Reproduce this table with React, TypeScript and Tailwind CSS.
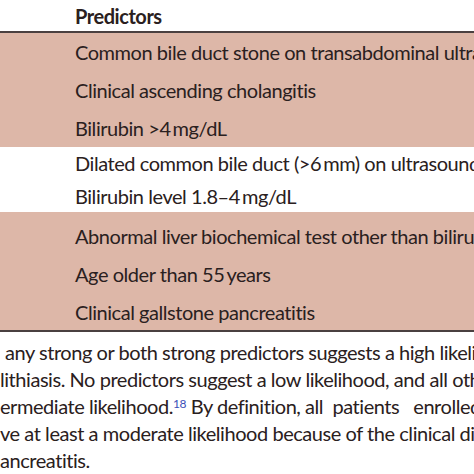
const strong = [
  'Common bile duct stone on transabdominal ultrasound',
  'Clinical ascending cholangitis',
  'Bilirubin >4\u2009mg/dL',
];

const moderate = [
  'Dilated common bile duct (>6\u2009mm) on ultrasound',
  'Bilirubin level 1.8\u20134\u2009mg/dL',
];

const weak = [
  'Abnormal liver biochemical test other than bilirubin',
  'Age older than 55\u2009years',
  'Clinical gallstone pancreatitis',
];

function Row({ text, h }: { text: string; h: string }) {
  return (
    <div className={`flex items-center ${h} pl-[75px] whitespace-nowrap`}>
      {text}
    </div>
  );
}

export default function App() {
  return (
    <div
      className="w-[474px] h-[474px] overflow-hidden bg-white text-[#2a2020] text-[20px] tracking-[-0.45px] leading-none [font-variant-ligatures:none]"
      style={{ fontFamily: 'Lato, "Open Sans", sans-serif' }}
    >
      {/* Header */}
      <div className="h-[31px] flex items-center pl-[75px] font-bold">Predictors</div>
      <div className="h-[2px] bg-[#4a4040]" />

      {/* Strong */}
      <div className="bg-[#ddb7a8] h-[114px] flex flex-col justify-center">
        {strong.map((t) => (
          <Row key={t} text={t} h="h-[38px]" />
        ))}
      </div>

      {/* Moderate */}
      <div className="bg-white h-[65px] flex flex-col justify-center">
        {moderate.map((t) => (
          <Row key={t} text={t} h="h-[33px]" />
        ))}
      </div>

      {/* Weak */}
      <div className="bg-[#ddb7a8] h-[118px] flex flex-col pt-[5px] overflow-hidden">
        {weak.map((t) => (
          <Row key={t} text={t} h="h-[38px] shrink-0" />
        ))}
      </div>
      <div className="h-[2px] bg-[#4a4040]" />

      {/* Footnote */}
      <div className="pt-[7px] leading-[27px] whitespace-nowrap">
        <div className="pl-[5px]">any strong or both strong predictors suggests a high likelihood</div>
        <div>lithiasis. No predictors suggest a low likelihood, and all others</div>
        <div>
          ermediate likelihood.<sup className="text-[#3b4fb8] text-[12px]">18</sup> By definition, all&nbsp; patients&nbsp;&nbsp; enrolled
        </div>
        <div>ve at least a moderate likelihood because of the clinical diagnosis</div>
        <div>ancreatitis.</div>
      </div>
      <div className="h-px bg-[#e4e4e4]" />
    </div>
  );
}
